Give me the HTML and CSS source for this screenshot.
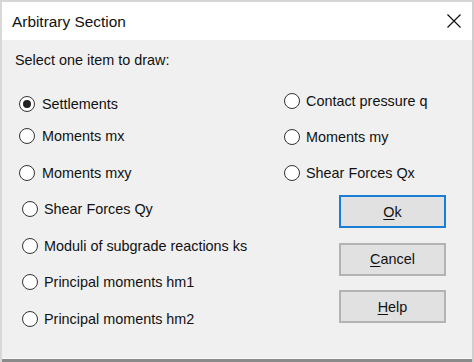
FILE: index.html
```html
<!DOCTYPE html>
<html>
<head>
<meta charset="utf-8">
<link rel="stylesheet" href="styles.css">
</head>
<body>
<div class="window">
  <div class="titlebar">
    <span class="title">Arbitrary Section</span>
    <svg class="close" width="14" height="14" viewBox="0 0 14 14"><path d="M0.5 0.5 L13.5 13.5 M13.5 0.5 L0.5 13.5" stroke="#111" stroke-width="1.2" fill="none"/></svg>
  </div>
  <div class="content">
    <p class="prompt">Select one item to draw:</p>
    <div class="columns">
      <div class="col-left">
        <label class="row first"><span class="radio checked"></span>Settlements</label>
        <label class="row"><span class="radio"></span>Moments mx</label>
        <label class="row"><span class="radio"></span>Moments mxy</label>
        <label class="row indent"><span class="radio"></span>Shear Forces Qy</label>
        <label class="row indent"><span class="radio"></span>Moduli of subgrade reactions ks</label>
        <label class="row indent"><span class="radio"></span>Principal moments hm1</label>
        <label class="row indent"><span class="radio"></span>Principal moments hm2</label>
      </div>
      <div class="col-right">
        <label class="row rrow"><span class="radio"></span>Contact pressure q</label>
        <label class="row rrow"><span class="radio"></span>Moments my</label>
        <label class="row rrow"><span class="radio"></span>Shear Forces Qx</label>
        <div class="buttons">
          <button class="btn default"><u>O</u>k</button>
          <button class="btn"><u>C</u>ancel</button>
          <button class="btn"><u>H</u>elp</button>
        </div>
      </div>
    </div>
  </div>
  <div class="under"></div>
</div>
</body>
</html>
```
FILE: styles.css
```css
* { box-sizing: border-box; }
html, body { margin: 0; padding: 0; }
body {
  width: 474px;
  height: 362px;
  overflow: hidden;
  font-family: "Liberation Sans", Arial, sans-serif;
  font-size: 14.4px;
  color: #111;
  background: #f0f0f0;
}
.window {
  width: 474px;
  height: 362px;
  display: flex;
  flex-direction: column;
  border-top: 2px solid #d6d6d6;
  border-left: 2px solid #d8d8d8;
  border-right: 2px solid #cfcfcf;
  background: #f0f0f0;
}
.titlebar {
  height: 38px;
  flex: none;
  background: #fff;
  display: flex;
  align-items: center;
  justify-content: space-between;
  padding: 0 11px 0 10px;
}
.title {
  font-size: 15.4px;
  color: #111;
  margin-top: 1px;
}
.close { display: block; margin-top: -1px; }
.content {
  flex: 1;
  padding: 10px 0 0 13px;
  background: #f0f0f0;
}
.prompt {
  margin: 0;
  height: 20px;
  line-height: 20px;
}
.columns {
  display: flex;
  align-items: flex-start;
}
.col-left {
  width: 269px;
  padding-left: 4px;
  margin-top: 19.25px;
  display: flex;
  flex-direction: column;
}
.col-right {
  margin-top: 12.5px;
  display: flex;
  flex-direction: column;
}
.row {
  display: flex;
  align-items: center;
  gap: 7px;
  height: 36.5px;
  white-space: nowrap;
}
.row.first { height: 28.5px; }
.row.indent { padding-left: 3px; gap: 6px; }
.row.rrow { height: 36px; gap: 6px; }
.radio {
  width: 16px;
  height: 16px;
  flex: none;
  border-radius: 50%;
  border: 1.5px solid #333;
  background: #fff;
  display: flex;
  align-items: center;
  justify-content: center;
}
.radio.checked::after {
  content: "";
  width: 8px;
  height: 8px;
  border-radius: 50%;
  background: #222;
}
.buttons {
  margin-top: 4.5px;
  margin-left: 55px;
  display: flex;
  flex-direction: column;
  gap: 14.5px;
}
.btn {
  width: 107px;
  height: 33px;
  background: #e1e1e1;
  border: 2px solid #b3b3b3;
  font-family: "Liberation Sans", Arial, sans-serif;
  font-size: 14.4px;
  color: #111;
  padding: 0;
}
.btn.default {
  border: 2px solid #1a7dd6;
}
.btn u { text-decoration-thickness: 1px; text-underline-offset: 2px; }
.under {
  height: 4px;
  flex: none;
  border-top: 1px solid #f9f9f9;
  background: #8a8a8a;
}
```
